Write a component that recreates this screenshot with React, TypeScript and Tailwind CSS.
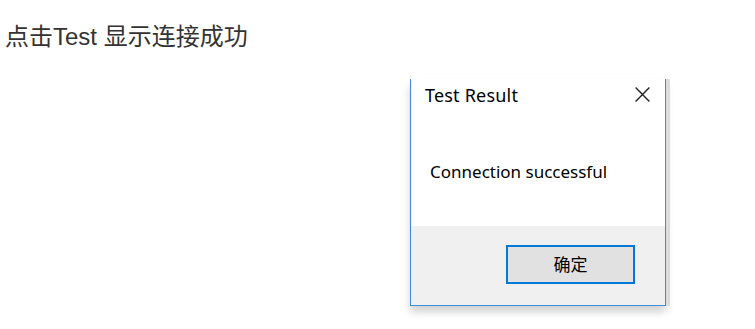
export default function App() {
  return (
    <div className="w-[755px] h-[329px] bg-white overflow-hidden">
      {/* page caption */}
      <p className="pl-[5px] pt-[22px] text-[24px] leading-[30px] text-[#333] font-['Liberation_Sans','Noto_Sans_CJK_SC',sans-serif]">
        点击Test 显示连接成功
      </p>

      {/* screenshot of the message box */}
      <div className="ml-[410px] mt-[27px] flex w-[260px]">
        <div className="w-[256px] h-[227px] flex flex-col bg-white border-x-[1.5px] border-b-[1.5px] border-[#3c8fd6] shadow-[0_6px_8px_rgba(0,0,0,0.18)] font-['Noto_Sans','Noto_Sans_CJK_SC',sans-serif] text-black">
          <div className="h-[31px] flex items-center justify-between pl-[14px] pr-[14px]">
            <span className="text-[18px] leading-none tracking-[0.2px]">Test Result</span>
            <svg width="17" height="17" viewBox="0 0 16 16" className="text-[#222]">
              <path d="M1.5 1.5 L14.5 14.5 M14.5 1.5 L1.5 14.5" stroke="currentColor" strokeWidth="1.3" fill="none" />
            </svg>
          </div>
          <div className="flex-1 pl-[19px] pt-[53px] text-[17px] leading-none">Connection successful</div>
          <div className="h-[79px] bg-[#f0f0f0] flex items-start justify-end pr-[30px] pt-[19px]">
            <button className="w-[129px] h-[39px] border-2 border-[#0078d7] bg-[#e1e1e1] text-[17px] text-black">
              确定
            </button>
          </div>
        </div>
        <div className="w-[4px] h-[227px] bg-[#dcdcdc]" />
      </div>
    </div>
  );
}
